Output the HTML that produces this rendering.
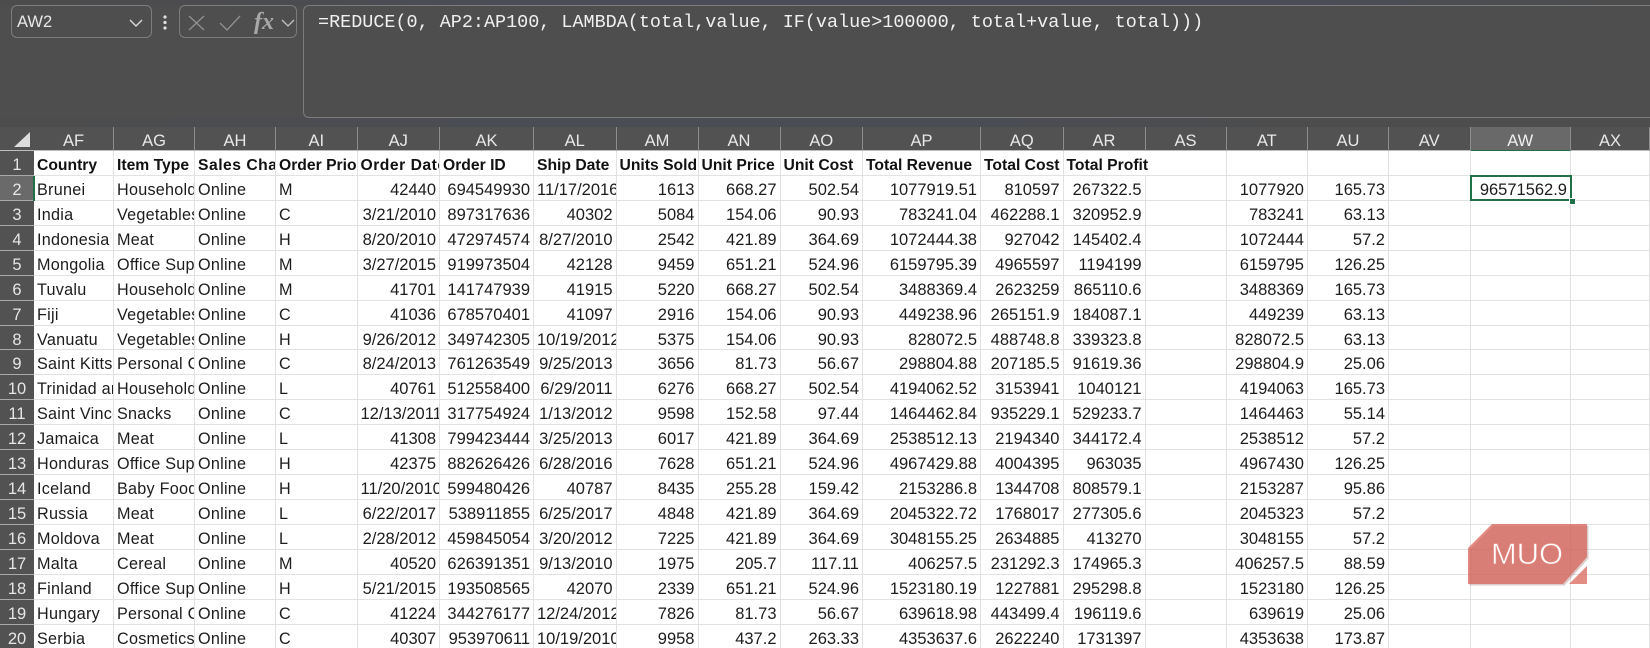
<!DOCTYPE html>
<html><head><meta charset="utf-8"><style>
html,body{margin:0;padding:0;width:1650px;height:648px;overflow:hidden;background:#fff}
body{position:relative;font-family:"Liberation Sans",sans-serif}
#top{position:absolute;left:0;top:0;width:1650px;height:127px;background:#4e4e4e}
#band{position:absolute;left:0;top:0;width:1650px;height:5px;background:linear-gradient(90deg,#4c4c4c,#4a4d58 40%,#4a4d58 75%,#4d4d4d)}
#band2{position:absolute;left:0;top:118px;width:1650px;height:9px;background:linear-gradient(90deg,#4d4d4d,#4b4d54 30%,#4b4d54 60%,#4d4d4d 80%)}
.box{position:absolute;box-sizing:border-box;border:1px solid #7c7c7c;border-radius:6px;background:#4e4e4e}
#name{left:11px;top:5px;width:141px;height:33px}
#nametxt{position:absolute;left:17px;top:10px;font-size:16.5px;line-height:24px;color:#e8e8e8}
#fxb{left:179px;top:5px;width:118px;height:33px}
#fb{left:303px;top:5px;width:1360px;height:113px}
#ftxt{position:absolute;left:318px;top:11px;font:18.45px/24px "Liberation Mono",monospace;color:#f0f0f0;white-space:pre}
#fx{position:absolute;left:254px;top:8px;font:italic 700 24px/28px "Liberation Serif",serif;color:#a8a8a8}
svg{position:absolute;left:0;top:0}
table{position:absolute;left:0;top:127px;display:block;border-collapse:collapse;border-spacing:0;width:1650px}
tbody{display:block}
tr{display:grid;grid-template-columns:34px 80px 81px 81px 81.5px 82.5px 94px 82.5px 82px 82px 82.5px 118px 82.5px 82px 81px 81.5px 81px 81.5px 100.5px 79px;height:24.93px}
tr.h{height:24.07px;background:#525252}
td,th{display:block;box-sizing:border-box;padding:2px 3px 0;margin:0;overflow:hidden;white-space:nowrap;font-weight:400;text-align:left;line-height:25px;height:24.93px;font-size:16.2px;letter-spacing:.25px;color:#1c1c1c;border-right:1px solid #e2e2e2;border-bottom:1px solid #e2e2e2}
td.n{text-align:right;font-size:16.5px;letter-spacing:0}
td.c{font-size:16.5px;letter-spacing:0}
tr.b td{font-weight:700;font-size:15.7px;letter-spacing:0;color:#111}
tr.b td.w{letter-spacing:.5px}
tr.b td.o{overflow:visible;border-right:0}
th{background:#525252;color:#e6e6e6;text-align:center;font-size:16.5px;letter-spacing:0;border-right:0;border-bottom:1px solid #a9a9a9;padding:2px 0 0}
tr.h th{height:24.07px;line-height:24px;border-right:1px solid #8d8d8d;border-bottom:1px solid #bdbdbd;color:#e8e8e8}
tr.h th:first-child{border-right:0}
tr.h th.a{background:#696969;color:#f0f0f0;border-bottom:1px solid #1f7145}
th.a{background:#6a6a6a}
#sel{position:absolute;box-sizing:border-box;left:1469.5px;top:175px;width:102px;height:26px;border:2px solid #1f7145}
#hd{position:absolute;left:1569px;top:198px;background:#1f7145;border:1px solid #fff;box-sizing:content-box;width:5px;height:5px}
#rg{position:absolute;left:33px;top:176px;width:2px;height:25px;background:#1f7145}
</style></head><body>
<div id="top"></div><div id="band"></div><div id="band2"></div>
<div class="box" id="name"></div><div id="nametxt">AW2</div>
<div class="box" id="fxb"></div><div class="box" id="fb"></div>
<div id="fx">fx</div>
<div id="ftxt">=REDUCE(0, AP2:AP100, LAMBDA(total,value, IF(value&gt;100000, total+value, total)))</div>
<table><tbody>
<tr class="h"><th></th><th>AF</th><th>AG</th><th>AH</th><th>AI</th><th>AJ</th><th>AK</th><th>AL</th><th>AM</th><th>AN</th><th>AO</th><th>AP</th><th>AQ</th><th>AR</th><th>AS</th><th>AT</th><th>AU</th><th>AV</th><th class="a">AW</th><th>AX</th></tr>
<tr class="b"><th>1</th><td>Country</td><td>Item Type</td><td class="w">Sales Channel</td><td>Order Priority</td><td class="w">Order Date</td><td>Order ID</td><td>Ship Date</td><td>Units Sold</td><td>Unit Price</td><td>Unit Cost</td><td>Total Revenue</td><td>Total Cost</td><td class="o">Total Profit</td><td></td><td></td><td></td><td></td><td></td><td></td></tr>
<tr><th class="a">2</th><td>Brunei</td><td>Household</td><td>Online</td><td>M</td><td class="n">42440</td><td class="n">694549930</td><td class="c">11/17/2016</td><td class="n">1613</td><td class="n">668.27</td><td class="n">502.54</td><td class="n">1077919.51</td><td class="n">810597</td><td class="n">267322.5</td><td></td><td class="n">1077920</td><td class="n">165.73</td><td></td><td class="n">96571562.9</td><td></td></tr>
<tr><th>3</th><td>India</td><td>Vegetables</td><td>Online</td><td>C</td><td class="n">3/21/2010</td><td class="n">897317636</td><td class="n">40302</td><td class="n">5084</td><td class="n">154.06</td><td class="n">90.93</td><td class="n">783241.04</td><td class="n">462288.1</td><td class="n">320952.9</td><td></td><td class="n">783241</td><td class="n">63.13</td><td></td><td></td><td></td></tr>
<tr><th>4</th><td>Indonesia</td><td>Meat</td><td>Online</td><td>H</td><td class="n">8/20/2010</td><td class="n">472974574</td><td class="n">8/27/2010</td><td class="n">2542</td><td class="n">421.89</td><td class="n">364.69</td><td class="n">1072444.38</td><td class="n">927042</td><td class="n">145402.4</td><td></td><td class="n">1072444</td><td class="n">57.2</td><td></td><td></td><td></td></tr>
<tr><th>5</th><td>Mongolia</td><td>Office Supplies</td><td>Online</td><td>M</td><td class="n">3/27/2015</td><td class="n">919973504</td><td class="n">42128</td><td class="n">9459</td><td class="n">651.21</td><td class="n">524.96</td><td class="n">6159795.39</td><td class="n">4965597</td><td class="n">1194199</td><td></td><td class="n">6159795</td><td class="n">126.25</td><td></td><td></td><td></td></tr>
<tr><th>6</th><td>Tuvalu</td><td>Household</td><td>Online</td><td>M</td><td class="n">41701</td><td class="n">141747939</td><td class="n">41915</td><td class="n">5220</td><td class="n">668.27</td><td class="n">502.54</td><td class="n">3488369.4</td><td class="n">2623259</td><td class="n">865110.6</td><td></td><td class="n">3488369</td><td class="n">165.73</td><td></td><td></td><td></td></tr>
<tr><th>7</th><td>Fiji</td><td>Vegetables</td><td>Online</td><td>C</td><td class="n">41036</td><td class="n">678570401</td><td class="n">41097</td><td class="n">2916</td><td class="n">154.06</td><td class="n">90.93</td><td class="n">449238.96</td><td class="n">265151.9</td><td class="n">184087.1</td><td></td><td class="n">449239</td><td class="n">63.13</td><td></td><td></td><td></td></tr>
<tr><th>8</th><td>Vanuatu</td><td>Vegetables</td><td>Online</td><td>H</td><td class="n">9/26/2012</td><td class="n">349742305</td><td class="c">10/19/2012</td><td class="n">5375</td><td class="n">154.06</td><td class="n">90.93</td><td class="n">828072.5</td><td class="n">488748.8</td><td class="n">339323.8</td><td></td><td class="n">828072.5</td><td class="n">63.13</td><td></td><td></td><td></td></tr>
<tr><th>9</th><td>Saint Kitts</td><td>Personal Care</td><td>Online</td><td>C</td><td class="n">8/24/2013</td><td class="n">761263549</td><td class="n">9/25/2013</td><td class="n">3656</td><td class="n">81.73</td><td class="n">56.67</td><td class="n">298804.88</td><td class="n">207185.5</td><td class="n">91619.36</td><td></td><td class="n">298804.9</td><td class="n">25.06</td><td></td><td></td><td></td></tr>
<tr><th>10</th><td>Trinidad and</td><td>Household</td><td>Online</td><td>L</td><td class="n">40761</td><td class="n">512558400</td><td class="n">6/29/2011</td><td class="n">6276</td><td class="n">668.27</td><td class="n">502.54</td><td class="n">4194062.52</td><td class="n">3153941</td><td class="n">1040121</td><td></td><td class="n">4194063</td><td class="n">165.73</td><td></td><td></td><td></td></tr>
<tr><th>11</th><td>Saint Vincent</td><td>Snacks</td><td>Online</td><td>C</td><td class="c">12/13/2011</td><td class="n">317754924</td><td class="n">1/13/2012</td><td class="n">9598</td><td class="n">152.58</td><td class="n">97.44</td><td class="n">1464462.84</td><td class="n">935229.1</td><td class="n">529233.7</td><td></td><td class="n">1464463</td><td class="n">55.14</td><td></td><td></td><td></td></tr>
<tr><th>12</th><td>Jamaica</td><td>Meat</td><td>Online</td><td>L</td><td class="n">41308</td><td class="n">799423444</td><td class="n">3/25/2013</td><td class="n">6017</td><td class="n">421.89</td><td class="n">364.69</td><td class="n">2538512.13</td><td class="n">2194340</td><td class="n">344172.4</td><td></td><td class="n">2538512</td><td class="n">57.2</td><td></td><td></td><td></td></tr>
<tr><th>13</th><td>Honduras</td><td>Office Supplies</td><td>Online</td><td>H</td><td class="n">42375</td><td class="n">882626426</td><td class="n">6/28/2016</td><td class="n">7628</td><td class="n">651.21</td><td class="n">524.96</td><td class="n">4967429.88</td><td class="n">4004395</td><td class="n">963035</td><td></td><td class="n">4967430</td><td class="n">126.25</td><td></td><td></td><td></td></tr>
<tr><th>14</th><td>Iceland</td><td>Baby Food</td><td>Online</td><td>H</td><td class="c">11/20/2010</td><td class="n">599480426</td><td class="n">40787</td><td class="n">8435</td><td class="n">255.28</td><td class="n">159.42</td><td class="n">2153286.8</td><td class="n">1344708</td><td class="n">808579.1</td><td></td><td class="n">2153287</td><td class="n">95.86</td><td></td><td></td><td></td></tr>
<tr><th>15</th><td>Russia</td><td>Meat</td><td>Online</td><td>L</td><td class="n">6/22/2017</td><td class="n">538911855</td><td class="n">6/25/2017</td><td class="n">4848</td><td class="n">421.89</td><td class="n">364.69</td><td class="n">2045322.72</td><td class="n">1768017</td><td class="n">277305.6</td><td></td><td class="n">2045323</td><td class="n">57.2</td><td></td><td></td><td></td></tr>
<tr><th>16</th><td>Moldova</td><td>Meat</td><td>Online</td><td>L</td><td class="n">2/28/2012</td><td class="n">459845054</td><td class="n">3/20/2012</td><td class="n">7225</td><td class="n">421.89</td><td class="n">364.69</td><td class="n">3048155.25</td><td class="n">2634885</td><td class="n">413270</td><td></td><td class="n">3048155</td><td class="n">57.2</td><td></td><td></td><td></td></tr>
<tr><th>17</th><td>Malta</td><td>Cereal</td><td>Online</td><td>M</td><td class="n">40520</td><td class="n">626391351</td><td class="n">9/13/2010</td><td class="n">1975</td><td class="n">205.7</td><td class="n">117.11</td><td class="n">406257.5</td><td class="n">231292.3</td><td class="n">174965.3</td><td></td><td class="n">406257.5</td><td class="n">88.59</td><td></td><td></td><td></td></tr>
<tr><th>18</th><td>Finland</td><td>Office Supplies</td><td>Online</td><td>H</td><td class="n">5/21/2015</td><td class="n">193508565</td><td class="n">42070</td><td class="n">2339</td><td class="n">651.21</td><td class="n">524.96</td><td class="n">1523180.19</td><td class="n">1227881</td><td class="n">295298.8</td><td></td><td class="n">1523180</td><td class="n">126.25</td><td></td><td></td><td></td></tr>
<tr><th>19</th><td>Hungary</td><td>Personal Care</td><td>Online</td><td>C</td><td class="n">41224</td><td class="n">344276177</td><td class="c">12/24/2012</td><td class="n">7826</td><td class="n">81.73</td><td class="n">56.67</td><td class="n">639618.98</td><td class="n">443499.4</td><td class="n">196119.6</td><td></td><td class="n">639619</td><td class="n">25.06</td><td></td><td></td><td></td></tr>
<tr><th>20</th><td>Serbia</td><td>Cosmetics</td><td>Online</td><td>C</td><td class="n">40307</td><td class="n">953970611</td><td class="c">10/19/2010</td><td class="n">9958</td><td class="n">437.2</td><td class="n">263.33</td><td class="n">4353637.6</td><td class="n">2622240</td><td class="n">1731397</td><td></td><td class="n">4353638</td><td class="n">173.87</td><td></td><td></td><td></td></tr>
</tbody></table>
<div id="rg"></div><div id="sel"></div><div id="hd"></div>
<svg width="1650" height="648" viewBox="0 0 1650 648" fill="none">
<path d="M130 20l6 6 6-6" stroke="#dcdcdc" stroke-width="1.4"/>
<circle cx="165" cy="17" r="1.6" fill="#e0e0e0"/><circle cx="165" cy="22.5" r="1.6" fill="#e0e0e0"/><circle cx="165" cy="28" r="1.6" fill="#e0e0e0"/>
<path d="M189 16l15 14M204 16l-15 14" stroke="#8f8f8f" stroke-width="1.4"/>
<path d="M220 23l7 7 13-14" stroke="#8f8f8f" stroke-width="1.4"/>
<path d="M282 20l6 6 6-6" stroke="#c4c4c4" stroke-width="1.3"/>
<path d="M14 147L30 132V147Z" fill="#dcdcdc"/>
<path d="M1492 524H1587V557L1563 584H1468V548Z" fill="#8a5a58" opacity=".3" transform="translate(1.5 1.5)"/>
<path d="M1492 524H1587V557L1563 584H1468V548Z" fill="#d85f55" opacity=".72"/>
<path d="M1587 566V584H1569Z" fill="#d85f55" opacity=".72"/>
<text x="1491" y="564" font-family="Liberation Sans" font-size="30" fill="#fff" stroke="#e08a82" stroke-width=".7" textLength="72" lengthAdjust="spacingAndGlyphs">MUO</text>
</svg>
</body></html>
